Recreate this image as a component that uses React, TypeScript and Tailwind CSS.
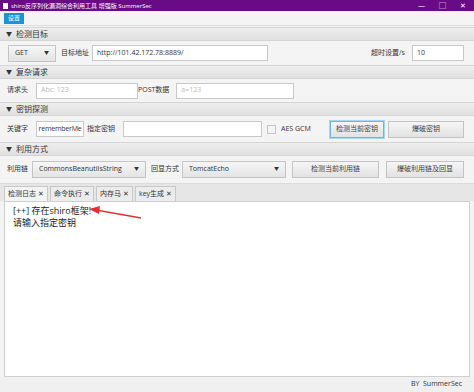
import React from "react";

const font = { fontFamily: '"Open Sans", "Noto Sans CJK SC", sans-serif' };

function Header({ title }: { title: string }) {
  return (
    <div className="flex h-[14px] items-center border-y border-[#d4d4d4] bg-gradient-to-b from-[#eeeeee] to-[#e0e0e0] pl-[6px] text-[8px] text-[#333] whitespace-nowrap">
      <span className="mr-[4px] text-[6px]">▼</span>
      {title}
    </div>
  );
}

function Label({ cls, children }: { cls?: string; children: React.ReactNode }) {
  return <span className={`shrink-0 whitespace-nowrap ${cls ?? ""}`}>{children}</span>;
}

function Input({ w, value, placeholder }: { w: string; value?: string; placeholder?: string }) {
  return (
    <div className={`flex h-[16px] shrink-0 items-center overflow-hidden whitespace-nowrap border border-[#c8c8c8] bg-white text-[7px] ${w}`}>
      {value ? <span className="text-[#333]">{value}</span> : <span className="text-[#bbb]">{placeholder}</span>}
    </div>
  );
}

function Select({ w, value }: { w: string; value: string }) {
  return (
    <div className={`flex h-[17px] shrink-0 items-center justify-between whitespace-nowrap border border-[#c4c4c4] bg-gradient-to-b from-[#f6f6f6] to-[#e4e4e4] px-[6px] text-[7px] text-[#333] ${w}`}>
      <span>{value}</span>
      <span className="text-[5px]">▼</span>
    </div>
  );
}

function Button({ w, label, focused }: { w: string; label: string; focused?: boolean }) {
  return (
    <div
      className={`flex h-[17px] shrink-0 items-center justify-center whitespace-nowrap border text-[7px] text-[#444] bg-gradient-to-b from-[#f6f6f6] to-[#e2e2e2] ${
        focused ? "border-[#6cb6e0] shadow-[0_0_0_1px_#a8d8f0]" : "border-[#c4c4c4]"
      } ${w}`}
    >
      {label}
    </div>
  );
}

export default function App() {
  return (
    <div className="flex h-[392px] w-[474px] flex-col bg-[#f4f4f4]" style={font}>
      {/* title bar */}
      <div className="flex h-[11px] shrink-0 items-center justify-between bg-[#6a0b86] pl-[3px] pr-[8px] text-white">
        <div className="flex items-center">
          <div className="mr-[3px] h-[6px] w-[5px] bg-white" />
          <span className="whitespace-nowrap text-[6px] leading-none">shiro反序列化漏洞综合利用工具 增强版 SummerSec</span>
        </div>
        <div className="flex items-center gap-[14px] text-[7px] leading-none">
          <span>—</span>
          <span>▢</span>
          <span>✕</span>
        </div>
      </div>
      {/* menu bar */}
      <div className="flex h-[15px] shrink-0 items-center border-b border-[#dcdcdc] bg-[#f4f4f4] pl-[4px]">
        <div className="flex h-[11px] w-[20px] items-center justify-center bg-[#1c93d3] text-[6px] text-white">设置</div>
      </div>
      <div className="h-[1px] shrink-0" />

      <Header title="检测目标" />
      <div className="flex h-[24px] shrink-0 items-center pl-[8px] text-[7px] text-[#333]">
        <Select w="w-[48px]" value="GET" />
        <Label cls="ml-[5px] mr-[3px]">目标地址</Label>
        <Input w="w-[176px] px-[4px]" value="http://101.42.172.78:8889/" />
        <Label cls="ml-[103px]">超时设置/s</Label>
        <div className="flex-1" />
        <Input w="w-[52px] mr-[10px] px-[4px]" value="10" />
      </div>

      <Header title="复杂请求" />
      <div className="flex h-[23px] shrink-0 items-center pl-[7px] text-[7px] text-[#333]">
        <Label cls="mr-[8px]">请求头</Label>
        <Input w="w-[102px] px-[4px]" placeholder="Abc: 123" />
        <Label cls="mr-[7px]">POST数据</Label>
        <Input w="w-[118px] px-[4px]" placeholder="a=123" />
      </div>

      <Header title="密钥探测" />
      <div className="flex h-[26px] shrink-0 items-center pl-[7px] text-[7px] text-[#333]">
        <Label cls="mr-[8px]">关键字</Label>
        <Input w="w-[48px] justify-center text-[6.5px] tracking-[-0.2px]" value="rememberMe" />
        <Label cls="ml-[3px] mr-[8px]">指定密钥</Label>
        <Input w="w-[139px]" />
        <div className="ml-[5px] h-[9px] w-[9px] shrink-0 border border-[#c4c4c4] bg-[#f4f4f4]" />
        <Label cls="ml-[5px]">AES GCM</Label>
        <div className="flex-1" />
        <Button w="w-[54px]" label="检测当前密钥" focused />
        <Button w="ml-[4px] mr-[10px] w-[76px]" label="爆破密钥" />
      </div>

      <Header title="利用方式" />
      <div className="flex h-[26px] shrink-0 items-center pl-[7px] text-[7px] text-[#333]">
        <Label cls="mr-[4px]">利用链</Label>
        <Select w="w-[114px]" value="CommonsBeanutilsString" />
        <Label cls="ml-[5px] mr-[3px]">回显方式</Label>
        <Select w="w-[104px]" value="TomcatEcho" />
        <div className="flex-1" />
        <Button w="w-[87px]" label="检测当前利用链" />
        <Button w="ml-[7px] mr-[10px] w-[78px]" label="爆破利用链及回显" />
      </div>

      {/* tabs */}
      <div className="mt-[1px] flex h-[18px] shrink-0 items-end border-t border-[#dcdcdc] bg-[#e6e6e6] pl-[4px] text-[7px] text-[#333]">
        {["检测日志", "命令执行", "内存马", "key生成"].map((t, i) => (
          <div
            key={t}
            className={`mr-[2px] flex h-[15px] items-center whitespace-nowrap border border-b-0 border-[#c8c8c8] px-[3px] ${
              i === 0 ? "bg-[#f4f4f4]" : "bg-[#ececec]"
            }`}
          >
            {t}
            <span className="ml-[2px] text-[7px]">✕</span>
          </div>
        ))}
      </div>

      {/* log area */}
      <div className="flex flex-1 bg-[#f4f4f4] px-[4px]">
        <div className="relative flex-1 border border-[#cfcfcf] bg-white pl-[8px] pt-[3px] text-[9px] leading-[12px] text-[#222]">
          <div className="whitespace-nowrap">[++] 存在shiro框架!</div>
          <div className="whitespace-nowrap">请输入指定密钥</div>
          <svg className="absolute left-[84px] top-[2px]" width="60" height="22" viewBox="0 0 60 22">
            <line x1="52" y1="14" x2="7" y2="6" stroke="#e53030" strokeWidth="1.3" />
            <polygon points="0,5 11,2 10,10" fill="#e53030" />
          </svg>
        </div>
      </div>

      {/* footer */}
      <div className="flex h-[15px] shrink-0 items-center justify-end bg-[#f0f0f0] pr-[12px] text-[7px] text-[#333]">
        BY&nbsp;&nbsp;SummerSec
      </div>
    </div>
  );
}
